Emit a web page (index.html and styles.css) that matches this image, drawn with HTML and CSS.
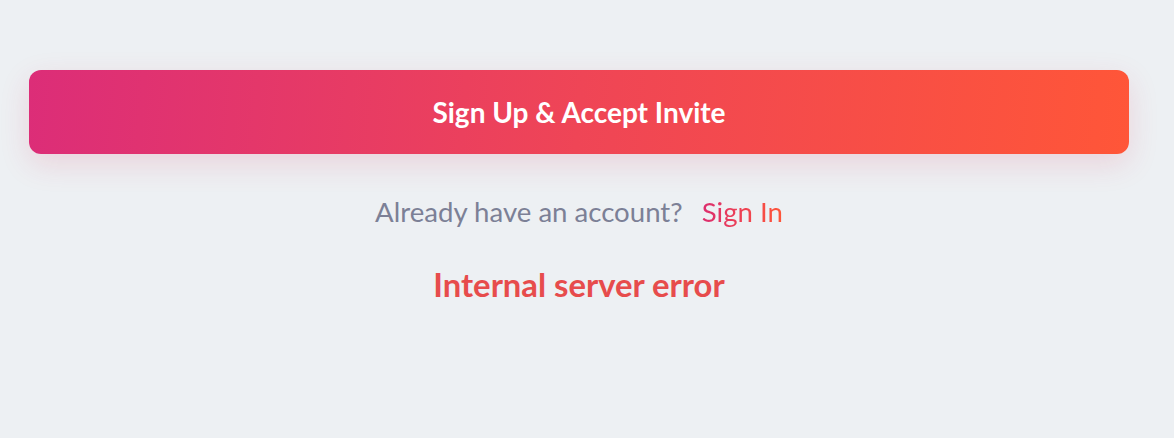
FILE: index.html
```html
<!DOCTYPE html>
<html>
<head>
<meta charset="utf-8">
<link rel="stylesheet" href="styles.css">
</head>
<body>
<div class="wrap">
  <button class="cta">Sign Up &amp; Accept Invite</button>
  <p class="already">Already have an account? <a class="signin" href="#">Sign In</a></p>
  <p class="error">Internal server error</p>
</div>
</body>
</html>
```
FILE: styles.css
```css
html, body {
  margin: 0;
  padding: 0;
  background: #edf0f3;
  font-family: Lato, "Noto Sans", sans-serif;
}
.wrap {
  width: 1100px;
  margin-left: 29px;
  padding-top: 70px;
  display: flex;
  flex-direction: column;
  align-items: center;
}
.cta {
  width: 100%;
  height: 84px;
  border: none;
  border-radius: 12px;
  background: linear-gradient(95deg, #dc2d78 0%, #ef4556 50%, #ff5638 100%);
  box-shadow: 0 10px 30px rgba(220, 45, 90, 0.15);
  color: #fff;
  font-family: Lato, "Noto Sans", sans-serif;
  font-weight: 700;
  font-size: 28px;
  cursor: pointer;
}
.already {
  margin: 40px 0 0;
  font-size: 27.6px;
  color: #7c8096;
  line-height: 36px;
}
.signin {
  margin-left: 12px;
  text-decoration: none;
  background: linear-gradient(90deg, #dc2d6e, #ff5638);
  -webkit-background-clip: text;
  background-clip: text;
  color: transparent;
}
.error {
  margin: 35px 0 0;
  font-size: 32.8px;
  font-weight: 700;
  color: #e74c4c;
  line-height: 40px;
}
```
